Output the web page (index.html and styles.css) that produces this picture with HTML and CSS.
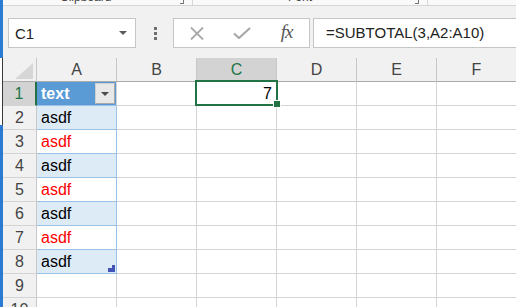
FILE: index.html
```html
<!DOCTYPE html>
<html>
<head>
 <title>Book1 - Excel</title>
 <meta charset="utf-8">
 <link rel="stylesheet" href="styles.css">
</head>
<body>
<div class="app">

<!-- bottom edge of the ribbon, mostly scrolled off -->
<div class="ribbon">
	<div class="rgroup clip"><span class="rlabel">Clipboard</span><span class="launcher"></span></div>
	<div class="rgroup font"><span class="rlabel">Font</span><span class="launcher"></span></div>
</div>

<!-- name box + formula bar -->
<div class="fbar">
	<div class="namebox"><span>C1</span><span class="caret"></span></div>
	<div class="grip"><i></i><i></i><i></i></div>
	<div class="fnbtns">
		<span class="fnbtn">
			<svg width="14" height="13" viewBox="0 0 14 13"><path d="M1 0.5 L13 12.5 M13 0.5 L1 12.5" stroke="#a8a8a8" stroke-width="1.8" fill="none"/></svg>
		</span>
		<span class="fnbtn">
			<svg width="18" height="12" viewBox="0 0 18 12"><path d="M1 6.5 L6 11 L17 1" stroke="#a8a8a8" stroke-width="2.2" fill="none"/></svg>
		</span>
		<span class="fnbtn fx">fx</span>
	</div>
	<div class="formula">=SUBTOTAL(3,A2:A10)</div>
</div>

<!-- worksheet -->
<div class="sheet">
	<div class="ch corner"><svg width="18" height="16" viewBox="0 0 18 16"><polygon points="18,0 18,16 0,16" fill="#d6d6d6"/></svg></div>
	<div class="ch">A</div>
	<div class="ch">B</div>
	<div class="ch sel">C</div>
	<div class="ch">D</div>
	<div class="ch">E</div>
	<div class="ch">F</div>

	<div class="rh sel">1</div>
	<div class="cell tbl thead">text<span class="filter"><span class="caret dark"></span></span></div>
	<div class="cell"></div>
	<div class="cell num active">7<span class="handle"></span></div>
	<div class="cell"></div>
	<div class="cell"></div>
	<div class="cell"></div>

	<div class="rh">2</div>
	<div class="cell tbl band">asdf</div>
	<div class="cell"></div><div class="cell"></div><div class="cell"></div><div class="cell"></div><div class="cell"></div>

	<div class="rh">3</div>
	<div class="cell tbl red">asdf</div>
	<div class="cell"></div><div class="cell"></div><div class="cell"></div><div class="cell"></div><div class="cell"></div>

	<div class="rh">4</div>
	<div class="cell tbl band">asdf</div>
	<div class="cell"></div><div class="cell"></div><div class="cell"></div><div class="cell"></div><div class="cell"></div>

	<div class="rh">5</div>
	<div class="cell tbl red">asdf</div>
	<div class="cell"></div><div class="cell"></div><div class="cell"></div><div class="cell"></div><div class="cell"></div>

	<div class="rh">6</div>
	<div class="cell tbl band">asdf</div>
	<div class="cell"></div><div class="cell"></div><div class="cell"></div><div class="cell"></div><div class="cell"></div>

	<div class="rh">7</div>
	<div class="cell tbl red">asdf</div>
	<div class="cell"></div><div class="cell"></div><div class="cell"></div><div class="cell"></div><div class="cell"></div>

	<div class="rh">8</div>
	<div class="cell tbl band">asdf<svg class="resize" width="7" height="7" viewBox="0 0 7 7"><polygon points="4,0 7,0 7,7 0,7 0,3 4,3" fill="#4254b8"/></svg></div>
	<div class="cell"></div><div class="cell"></div><div class="cell"></div><div class="cell"></div><div class="cell"></div>

	<div class="rh">9</div>
	<div class="cell"></div><div class="cell"></div><div class="cell"></div><div class="cell"></div><div class="cell"></div><div class="cell"></div>

	<div class="rh">10</div>
	<div class="cell"></div><div class="cell"></div><div class="cell"></div><div class="cell"></div><div class="cell"></div><div class="cell"></div>
</div>

</div>
</body>
</html>
```

FILE: styles.css
```css
	html, body {
		margin: 0;
		padding: 0;
		overflow: hidden;
		background: #ffffff;
	}

	.app {
		position: relative;
		height: 307px;
		border-left: 3px solid #2b7bd2;
		font-family: "Liberation Sans", Arial, sans-serif;
		color: #000000;
	}

	/* bit of another window peeking over the left edge */
	.app::before {
		content: "";
		position: absolute;
		left: -3px;
		top: 58px;
		width: 2px;
		height: 67px;
		background: #ffffff;
		border-right: 1px solid #3a3a3a;
	}

	/* ribbon */
	.ribbon {
		display: flex;
		height: 5px;
		overflow: hidden;
		background: #f9f9f9;
		border-bottom: 1px solid #d6d6d6;
	}

	.rgroup {
		display: flex;
		align-items: flex-end;
		border-right: 1px solid #d6d6d6;
		box-sizing: border-box;
	}
	.rgroup.clip { width: 190px; padding-left: 57px; }
	.rgroup.font { width: 235px; padding-left: 95px; }

	.rlabel {
		font-family: "Liberation Sans", Arial, sans-serif;
		font-size: 12px;
		line-height: 12px;
		color: #444444;
		margin-bottom: 2px;
		white-space: nowrap;
	}

	.launcher {
		align-self: flex-start;
		margin-left: auto;
		margin-right: 8px;
		width: 3px;
		height: 3px;
		border-right: 1px solid #777777;
		border-bottom: 1px solid #777777;
	}

	/* formula bar */
	.fbar {
		display: flex;
		align-items: flex-start;
		height: 52px;
		box-sizing: border-box;
		padding-top: 12px;
		padding-left: 5px;
		background: #f1f1f1;
	}

	.namebox {
		display: flex;
		align-items: center;
		justify-content: space-between;
		width: 128px;
		height: 30px;
		box-sizing: border-box;
		padding: 0 8px 0 6px;
		background: #ffffff;
		border: 1px solid #c6c6c6;
		font-size: 15px;
		color: #222222;
	}

	.caret {
		width: 0;
		height: 0;
		border-left: 4px solid transparent;
		border-right: 4px solid transparent;
		border-top: 4px solid #5a5a5a;
	}
	.caret.dark { border-top-color: #4a4a4a; border-left-width: 4px; border-right-width: 4px; }

	.grip {
		display: flex;
		flex-direction: column;
		gap: 2px;
		margin: 9px 16px 0 18px;
	}
	.grip i {
		display: block;
		width: 3px;
		height: 3px;
		background: #6e6e6e;
	}

	.fnbtns {
		display: flex;
		width: 137px;
		height: 30px;
		box-sizing: border-box;
		background: #ffffff;
		border: 1px solid #c6c6c6;
	}

	.fnbtn {
		display: flex;
		align-items: center;
		justify-content: center;
		width: 45px;
	}

	.fx {
		font-family: "Liberation Serif", "Times New Roman", serif;
		font-style: italic;
		font-size: 19px;
		color: #555555;
		letter-spacing: -1px;
		padding-bottom: 2px;
	}

	.formula {
		flex: 1;
		height: 30px;
		box-sizing: border-box;
		margin-left: 3px;
		padding-left: 12px;
		line-height: 28px;
		background: #ffffff;
		border: 1px solid #c6c6c6;
		border-right: none;
		font-size: 15px;
		color: #222222;
		white-space: nowrap;
	}

	/* sheet grid */
	.sheet {
		display: grid;
		grid-template-columns: 34px repeat(6, 80px);
		grid-auto-rows: 24px;
		font-size: 16px;
	}

	.sheet > div {
		box-sizing: border-box;
		display: flex;
		align-items: center;
	}

	.ch {
		justify-content: center;
		background: #f1f1f1;
		border-right: 1px solid #c8c8c8;
		border-bottom: 1px solid #ababab;
		color: #444444;
	}
	.ch.sel { background: #d3d3d3; color: #217346; }

	.corner {
		align-items: flex-end !important;
		justify-content: flex-end !important;
		padding: 0 3px 2px 0;
	}
	.corner svg { display: block; }

	.rh {
		justify-content: center;
		background: #f1f1f1;
		border-right: 1px solid #c8c8c8;
		border-bottom: 1px solid #d4d4d4;
		color: #444444;
	}
	.rh.sel {
		background: #d3d3d3;
		color: #217346;
		border-right: 2px solid #217346;
	}

	.cell {
		position: relative;
		padding-left: 4px;
		border-right: 1px solid #d4d4d4;
		border-bottom: 1px solid #d4d4d4;
		white-space: nowrap;
	}

	.tbl {
		border-right-color: #9bc2e6;
		border-bottom-color: #9bc2e6;
	}
	.band { background: #ddebf7; }
	.red { color: #ff0000; }

	.thead {
		justify-content: space-between;
		padding-right: 1px;
		background: #5b9bd5;
		color: #ffffff;
		font-weight: bold;
		border-right-color: #d4d4d4;
	}

	.filter {
		display: flex;
		align-items: center;
		justify-content: center;
		width: 20px;
		height: 21px;
		box-sizing: border-box;
		background: #e8e8e8;
		border: 1px solid #a9a9a9;
		border-top-color: #d0d0d0;
		border-left-color: #d0d0d0;
	}

	.num {
		justify-content: flex-end;
		padding-right: 4px;
	}

	.active::after {
		content: "";
		position: absolute;
		left: -2px;
		top: -2px;
		right: -2px;
		bottom: -1px;
		border: 2px solid #217346;
		pointer-events: none;
	}

	.handle {
		position: absolute;
		right: -5px;
		bottom: -3px;
		width: 6px;
		height: 6px;
		background: #217346;
		border: 1px solid #ffffff;
		z-index: 2;
	}

	.resize {
		position: absolute;
		right: 1px;
		bottom: 1px;
	}
```
